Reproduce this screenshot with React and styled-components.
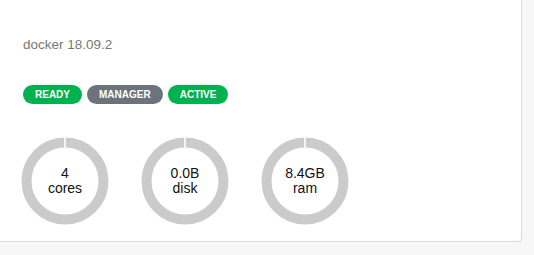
import React from 'react';
import styled, { createGlobalStyle } from 'styled-components';

const GlobalStyle = createGlobalStyle`
    body {
        margin: 0;
        background: #f7f7f7;
        font-family: "Liberation Sans", Arial, sans-serif;
    }
`;

const Page = styled.div`
    width: 534px;
    height: 255px;
    padding: 0 12px 0 0;
    box-sizing: border-box;
`;

const Card = styled.section`
    width: 522px;
    height: 242px;
    box-sizing: border-box;
    background: #fff;
    border-right: 1px solid #dcdcdc;
    border-bottom: 1px solid #dcdcdc;
    border-radius: 0 0 4px 0;
    padding: 37px 0 0 23px;
`;

const Version = styled.p`
    margin: 0;
    font-size: 13.5px;
    line-height: 16px;
    color: #777;
`;

const Badges = styled.div`
    display: flex;
    gap: 5px;
    margin-top: 32px;
`;

const Badge = styled.span`
    display: inline-flex;
    align-items: center;
    height: 19px;
    padding: 0 12px;
    border-radius: 10px;
    font-size: 10px;
    font-weight: bold;
    color: #fff;
    background: ${p => (p.$tone === 'gray' ? '#6c737c' : '#00b14f')};
`;

const Stats = styled.div`
    display: flex;
    gap: 32px;
    margin-top: 33px;
    margin-left: -2px;
`;

const Donut = styled.div`
    position: relative;
    width: 88px;
    height: 88px;

    svg {
        display: block;
    }
`;

const Label = styled.div`
    position: absolute;
    inset: 0;
    display: flex;
    flex-direction: column;
    align-items: center;
    justify-content: center;
    font-size: 14px;
    line-height: 15px;
    color: #111;
`;

const stats = [
    { value: '4', unit: 'cores' },
    { value: '0.0B', unit: 'disk' },
    { value: '8.4GB', unit: 'ram' },
];

const Ring = () => (
    <svg width="88" height="88" viewBox="0 0 88 88">
        <circle cx="44" cy="44" r="38.5" fill="none" stroke="#cbcbcb" strokeWidth="10" />
        <line x1="44" y1="0" x2="44" y2="12" stroke="#fff" strokeWidth="1.6" />
    </svg>
);

export default function App() {
    return (
        <Page>
            <GlobalStyle />
            <Card>
                <Version>docker 18.09.2</Version>
                <Badges>
                    <Badge>READY</Badge>
                    <Badge $tone="gray">MANAGER</Badge>
                    <Badge>ACTIVE</Badge>
                </Badges>
                <Stats>
                    {stats.map(s => (
                        <Donut key={s.unit}>
                            <Ring />
                            <Label>
                                <span>{s.value}</span>
                                <span>{s.unit}</span>
                            </Label>
                        </Donut>
                    ))}
                </Stats>
            </Card>
        </Page>
    );
}
